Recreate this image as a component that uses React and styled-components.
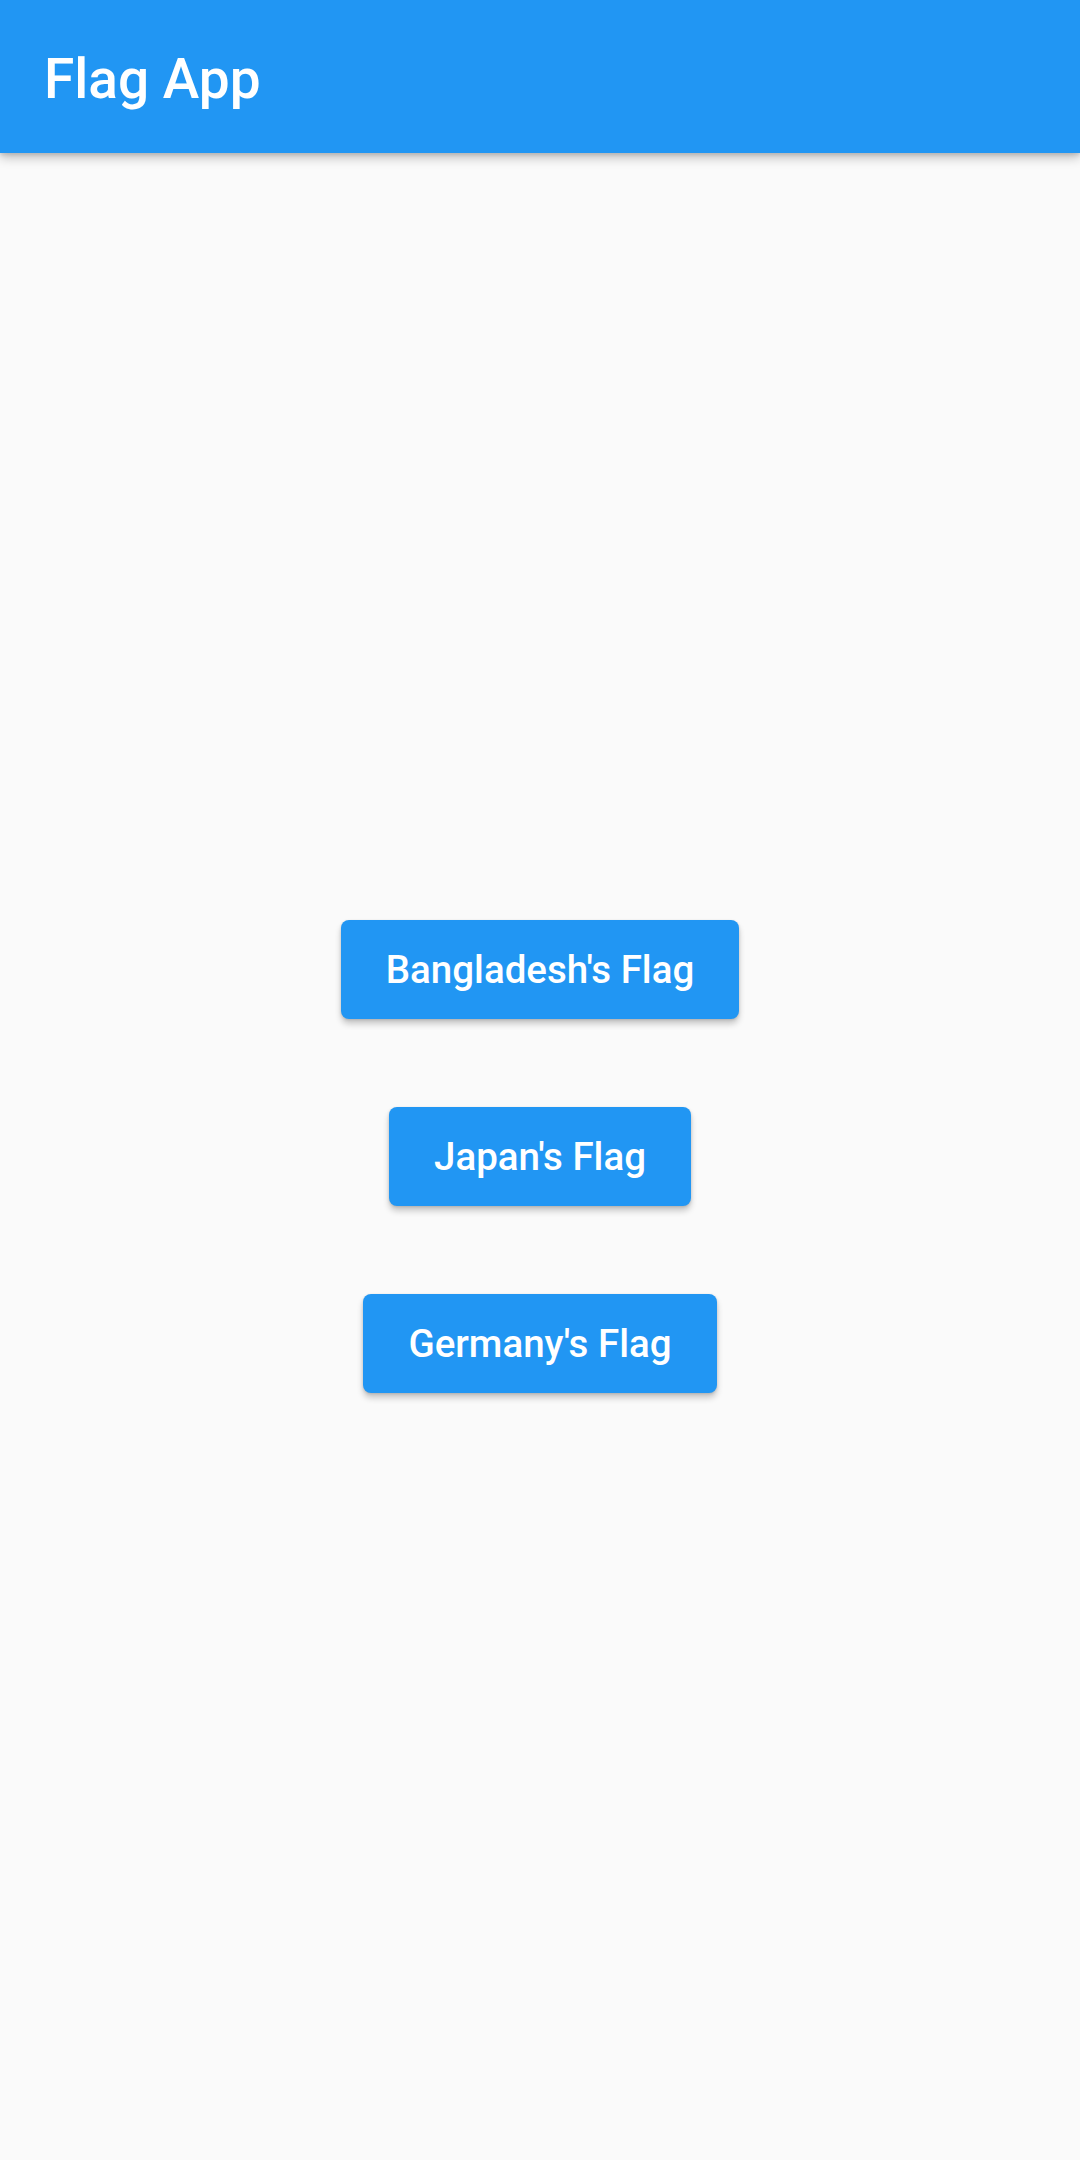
import React from "react";
import styled, { createGlobalStyle } from "styled-components";

const GlobalStyle = createGlobalStyle`
  html, body {
    margin: 0;
    padding: 0;
    background: #fafafa;
  }
  body {
    font-family: Roboto, "Noto Sans", "Liberation Sans", sans-serif;
  }
  * { box-sizing: border-box; }
`;

const Screen = styled.div`
  display: flex;
  flex-direction: column;
  width: 1080px;
  height: 2160px;
  background: #fafafa;
`;

const AppBar = styled.header`
  position: relative;
  z-index: 1;
  flex: 0 0 auto;
  height: 153px;
  display: flex;
  align-items: center;
  padding: 0 44px;
  background: #2196f3;
  box-shadow: 0 5px 10px rgba(0, 0, 0, 0.22), 0 2px 4px rgba(0, 0, 0, 0.12);
`;

const Title = styled.h1`
  margin: 0;
  padding-top: 4px;
  font-family: Roboto, sans-serif;
  font-weight: 500;
  font-size: 55px;
  letter-spacing: 0;
  color: #ffffff;
`;

const Body = styled.main`
  flex: 1 1 auto;
  display: flex;
  flex-direction: column;
  align-items: center;
  justify-content: center;
  gap: 88px;
`;

const FlagButton = styled.button`
  height: 99px;
  padding: 0 45px;
  border: none;
  border-radius: 8px;
  background: #2196f3;
  color: #ffffff;
  font-family: Roboto, sans-serif;
  font-weight: 500;
  font-size: 38.5px;
  letter-spacing: 0;
  box-shadow: 0 5px 6px rgba(0, 0, 0, 0.2), 0 1px 3px rgba(0, 0, 0, 0.14);
  cursor: pointer;
`;

const flags = ["Bangladesh's Flag", "Japan's Flag", "Germany's Flag"];

export default function App() {
  return (
    <>
      <GlobalStyle />
      <Screen>
        <AppBar>
          <Title>Flag App</Title>
        </AppBar>
        <Body>
          {flags.map((label) => (
            <FlagButton key={label}>{label}</FlagButton>
          ))}
        </Body>
      </Screen>
    </>
  );
}
